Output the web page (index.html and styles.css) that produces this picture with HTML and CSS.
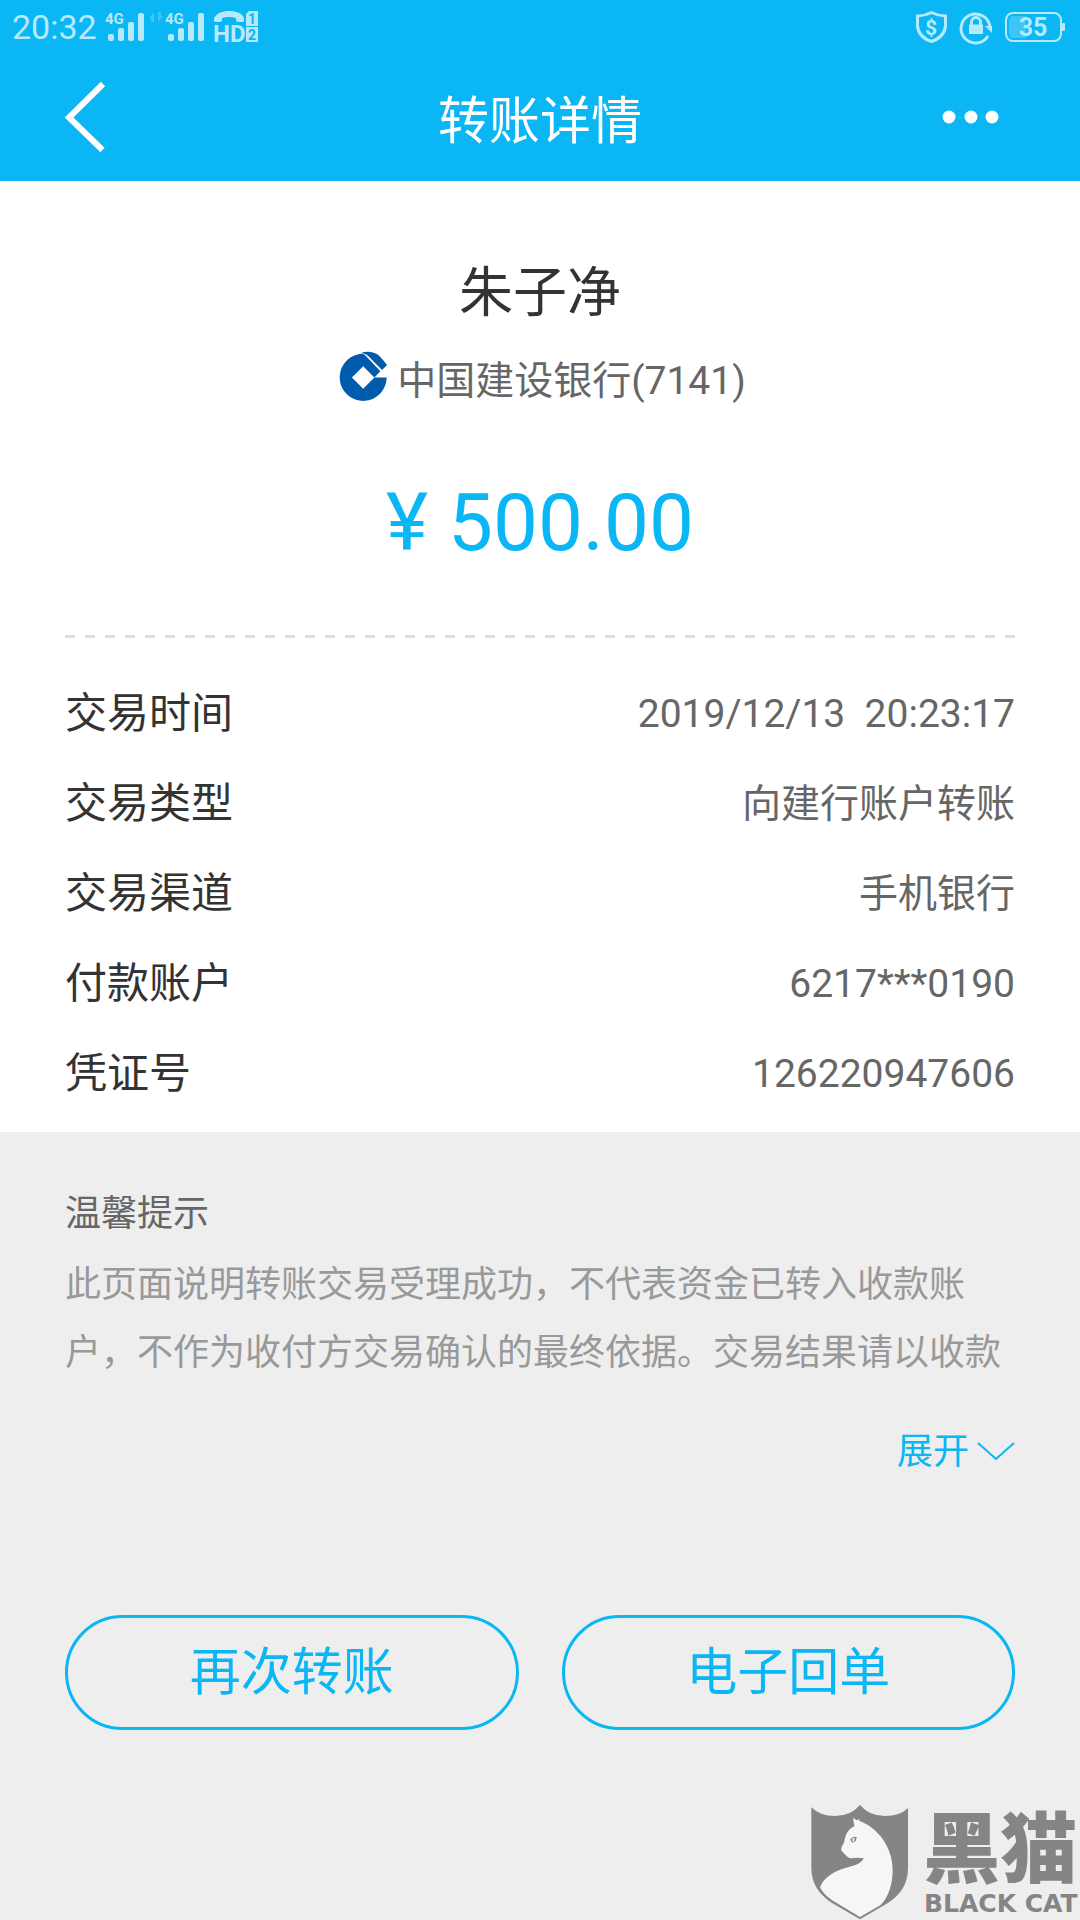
FILE: index.html
```html
<!DOCTYPE html>
<html lang="zh-CN">
<head>
    <meta charset="UTF-8">
    <meta name="viewport" content="width=device-width, initial-scale=1.0">
    <title>转账详情</title>
    <link rel="stylesheet" href="styles.css">
</head>
<body>
    <!-- Header -->
    <header class="header">
        <div class="status-bar">
            <div class="status-left">
                <span class="time">20:32</span>
                <svg class="signal" width="154" height="34" viewBox="105 10 154 34" aria-hidden="true">
                    <g id="bars">
                        <text x="105" y="24" class="net">4G</text>
                        <rect x="108" y="34" width="6" height="7" rx="2"/>
                        <rect x="118" y="28" width="6" height="13" rx="2"/>
                        <rect x="128" y="22" width="6" height="19" rx="2"/>
                        <rect x="138" y="13" width="6" height="28" rx="2"/>
                    </g>
                    <use href="#bars" x="60"/>
                    <path class="faint" d="M149 18l5-6v10h-3v-4zM163 16l-5 6V12h3v4z"/>
                    <path d="M214 21v-3c3-5 8-7 15-7s13 2 15 7v3q0 1-1 1h-5q-2 0-2-2v-2q-7-2-14 0v2q0 2-2 2h-5q-1 0-1-1z"/>
                    <text x="213" y="42" class="hd">HD</text>
                    <path d="M249 11h9v15h-12V14zM246 27h12v15h-12z"/>
                    <text x="252" y="24" class="sim">1</text>
                    <text x="252" y="40" class="sim">2</text>
                </svg>
            </div>
            <svg class="status-right" width="150" height="34" viewBox="915 10 150 34" aria-hidden="true">
                <path class="line" d="M931.5 12.5q7 3.500 14 3.500v10q-1 11-14 15.500q-13-4.500-14-15.500v-10q7 0 14-3.500z"/>
                <text x="931" y="35" class="dollar">$</text>
                <path class="line" d="M988 36a14.500 14.500 0 1 1 2-9"/>
                <path d="M985 26h7v7z"/>
                <rect x="969" y="24.500" width="14" height="9.500"/>
                <path class="line" d="M971.500 25v-3a4.500 4.500 0 0 1 9 0v3"/>
                <rect class="battery" x="1006" y="13" width="55" height="28" rx="7"/>
                <path class="faint" d="M1026 16h-12q-5 0-5 5v12q0 5 5 5h12z"/>
                <rect x="1062" y="23" width="3" height="8" rx="1"/>
                <text x="1033" y="36" class="percent">35</text>
            </svg>
        </div>
        <nav class="nav">
            <button class="icon-btn" aria-label="返回">
                <svg width="42" height="72" viewBox="0 0 42 72"><path d="M38 3L4 36.500L37.500 69" fill="none" stroke="#fff" stroke-width="6"/></svg>
            </button>
            <h1>转账详情</h1>
            <button class="icon-btn" aria-label="更多">
                <svg width="58" height="14" viewBox="0 0 58 14" fill="#fff"><circle cx="8" cy="7" r="6.500"/><circle cx="30" cy="7" r="6.500"/><circle cx="51" cy="7" r="6.500"/></svg>
            </button>
        </nav>
    </header>

    <!-- Transfer detail -->
    <main class="detail">
        <h2>朱子净</h2>
        <div class="bank">
            <svg width="49" height="51" viewBox="60 328 146 154" fill="#005bac" aria-hidden="true">
                <path fill-rule="evenodd" d="M203 408A71 71 0 1 1 118 338Q130 334 138 341L184 389L166 408L132 374L98 408L132 442L166 408z"/>
                <path d="M125 334Q150 326 172 336Q182 341 204 370L189 385L145 341Q137 335 125 334z"/>
            </svg>
            <span>中国建设银行(7141)</span>
        </div>
        <p class="amount">¥ 500.00</p>
        <div class="divider"></div>
        <dl class="rows">
            <div class="row"><dt>交易时间</dt><dd>2019/12/13&nbsp; 20:23:17</dd></div>
            <div class="row"><dt>交易类型</dt><dd>向建行账户转账</dd></div>
            <div class="row"><dt>交易渠道</dt><dd>手机银行</dd></div>
            <div class="row"><dt>付款账户</dt><dd>6217***0190</dd></div>
            <div class="row"><dt>凭证号</dt><dd>126220947606</dd></div>
        </dl>
    </main>

    <!-- Tips -->
    <section class="tips">
        <h3>温馨提示</h3>
        <p>此页面说明转账交易受理成功，不代表资金已转入收款账户，不作为收付方交易确认的最终依据。交易结果请以收款</p>
        <button class="expand">
            展开
            <svg width="38" height="22" viewBox="0 0 38 22"><path d="M1 2L19 18L37 2" fill="none" stroke="#0ab6f4" stroke-width="2"/></svg>
        </button>
    </section>

    <div class="actions">
        <button class="action-btn">再次转账</button>
        <button class="action-btn">电子回单</button>
    </div>

    <!-- Watermark -->
    <svg class="watermark" width="270" height="137" viewBox="90 9 810 411" role="img" aria-label="黑猫 BLACK CAT">
        <path fill="#878485" d="M94 82Q120 108 165 108Q212 108 240 75Q268 108 315 108Q360 108 384 84V265C384 310 362 345 325 368L240 418L155 368C118 345 94 310 94 265z"/>
        <path fill="#f6f6f6" d="M219 114L231 121L238 117L238 123C292 142 338 200 338 270C338 310 326 352 302 375L240 411L160 363C145 354 128 338 120 322C132 290 165 270 217 258Q242 252 252 235Q232 231 213 235C202 234 197 224 185 213Q181 206 188 195Q194 186 196 170Q203 148 223 139z"/>
        <path fill="#878485" d="M211 178q8-11 19-6q-1 14-12 16q-6-2-7-10z"/>
        <path fill="#f6f6f6" d="M218 174l6 1l-2 10l-5-2z"/>
        <text x="430" y="290" class="mark-cn">黑猫</text>
        <text x="432" y="397" class="mark-en">BLACK CAT</text>
    </svg>
</body>
</html>
```
FILE: styles.css
```css
* {
    box-sizing: border-box;
}
body {
    position: relative;
    min-height: 100vh;
    margin: 0;
    font-family: Roboto, "Noto Sans CJK SC", sans-serif;
    background: #eee;
    color: #333;
}
h1, h2, h3, p, dl, dd {
    margin: 0;
    font-weight: normal;
}
button {
    padding: 0;
    border: none;
    background: none;
    font-family: inherit;
    color: #0ab6f4;
    cursor: pointer;
}
svg {
    display: block;
    overflow: visible;
}

/* Header */
.header {
    background: #0ab6f4;
    color: white;
}
.status-bar {
    display: flex;
    justify-content: space-between;
    align-items: center;
    height: 54px;
    padding: 0 15px 0 12px;
    color: #b6e9fc;
    fill: #b6e9fc;
}
.status-left {
    display: flex;
    align-items: center;
    gap: 8px;
}
.time {
    font-size: 34px;
    line-height: 56px;
}
.net {
    font-size: 15px;
    font-weight: bold;
}
.hd {
    font-size: 24px;
    font-weight: bold;
}
.sim {
    font-size: 14px;
    font-weight: bold;
    text-anchor: middle;
    fill: #0ab6f4;
}
.faint {
    opacity: 0.3;
}
.line {
    fill: none;
    stroke: #b6e9fc;
    stroke-width: 3;
}
.battery {
    fill: none;
    stroke: #b6e9fc;
    stroke-width: 2;
}
.dollar {
    font-size: 21px;
    font-weight: bold;
    text-anchor: middle;
}
.percent {
    font-size: 25px;
    font-weight: bold;
    text-anchor: middle;
}
.nav {
    display: flex;
    justify-content: space-between;
    align-items: center;
    height: 127px;
    padding: 0 65px 2px;
}
.nav h1 {
    font-size: 51px;
}
.icon-btn {
    display: flex;
    width: 74px;
}

/* Transfer detail */
.detail {
    padding: 78px 65px 13px;
    background: white;
    text-align: center;
}
.detail h2 {
    font-size: 54px;
    line-height: 70px;
}
.bank {
    display: flex;
    justify-content: center;
    gap: 9px;
    margin-top: 22px;
    padding-left: 5px;
    font-size: 39px;
    line-height: 60px;
    color: #666;
}
.amount {
    margin-top: 62px;
    font-size: 80px;
    line-height: 100px;
    color: #0ab6f4;
}
.divider {
    height: 3px;
    margin: 62px 0 31px;
    background: repeating-linear-gradient(to right, #ddd 0 10px, transparent 10px 20px);
}
.row {
    display: flex;
    justify-content: space-between;
    line-height: 90px;
}
.row dt {
    font-size: 42px;
}
.row dd {
    font-size: 39px;
    color: #666;
}

/* Tips */
.tips {
    padding: 48px 65px 0;
    font-size: 36px;
    line-height: 68px;
}
.tips h3 {
    font-size: 36px;
    color: #666;
}
.tips p {
    margin-top: 3px;
    color: #999;
}
.expand {
    display: flex;
    align-items: center;
    gap: 8px;
    margin: 40px 0 0 auto;
    font-size: 36px;
    line-height: 50px;
}

/* Buttons */
.actions {
    display: flex;
    gap: 43px;
    padding: 138px 65px 190px;
}
.action-btn {
    flex: 1;
    height: 115px;
    border: 3px solid #0ab6f4;
    border-radius: 58px;
    font-size: 51px;
    line-height: 60px;
}

.watermark {
    position: absolute;
    right: 0;
    bottom: 0;
    fill: #878485;
}
.mark-cn {
    font-family: "Noto Sans CJK SC", sans-serif;
    font-size: 231px;
    font-weight: 900;
}
.mark-en {
    font-family: "DejaVu Sans", sans-serif;
    font-size: 75px;
    font-weight: bold;
}
```
